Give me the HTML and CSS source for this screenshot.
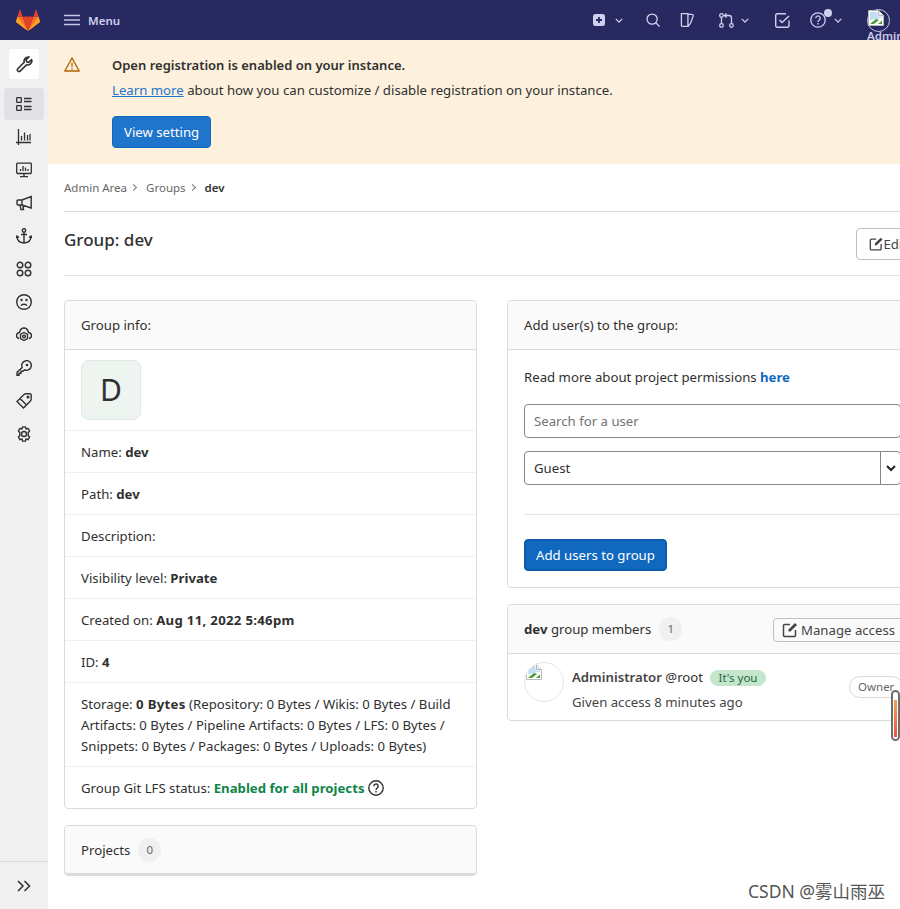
FILE: index.html
```html
<!DOCTYPE html>
<html lang="en">
<head>
    <meta charset="UTF-8">
    <meta name="viewport" content="width=device-width, initial-scale=1.0">
    <title>Group: dev</title>
    <link rel="stylesheet" href="styles.css">
</head>
<body>
    <svg class="sprites" width="0" height="0">
        <symbol id="broken" viewBox="0 0 16 16">
            <path d="M.5.5h10l5 5v10H.5z" fill="#fff" stroke="#b8b8b8"/>
            <path d="M10.5.5v5h5" fill="#eee" stroke="#b8b8b8"/>
            <path d="M2 2h7.500v4.500H14V8L2 10z" fill="#c5dcf5"/>
            <path d="M2 14l6-5 3 1-5 4z" fill="#4f9a35"/>
            <path d="M10 14l4-3.500V14z" fill="#4f9a35"/>
        </symbol>
        <symbol id="edit" viewBox="0 0 16 16">
            <path d="M8 2.500H2.500a1 1 0 0 0-1 1V13.500a1 1 0 0 0 1 1H12.500a1 1 0 0 0 1-1V8" fill="none" stroke="currentColor" stroke-width="1.500"/>
            <path d="M6.500 9.500v-2L13 1l2 2-6.500 6.500z" fill="currentColor"/>
        </symbol>
    </svg>

    <header class="topbar">
        <svg class="logo" width="24" height="22" viewBox="0 0 24 22">
            <path d="M12 22L0 13l1.500-5.500h5z" fill="#fc6d26"/>
            <path d="M12 22l12-9-1.500-5.500h-5z" fill="#fc6d26"/>
            <path d="M12 22L6.500 7.500h11z" fill="#e24329"/>
            <path d="M12 22L1.500 7.500 0 13z" fill="#fca326"/>
            <path d="M12 22L22.500 7.500 24 13z" fill="#fca326"/>
            <path d="M1.500 7.500L4 0l2.500 7.500z" fill="#e24329"/>
            <path d="M22.500 7.500L20 0l-2.500 7.500z" fill="#e24329"/>
        </svg>
        <div class="menu-toggle">
            <svg width="16" height="12" viewBox="0 0 16 12"><path d="M0 1.500h16M0 6h16M0 10.500h16" stroke="#c6c5e8" stroke-width="1.400"/></svg>
            <span class="menu-label">Menu</span>
        </div>
        <div class="topbar-icons">
            <span class="top-item top-new">
                <svg width="12" height="12" viewBox="0 0 12 12"><rect width="12" height="12" rx="2.500" fill="#d1d0ef"/><path d="M6 3v6M3 6h6" stroke="#2b2862" stroke-width="1.800"/></svg>
                <svg class="caret" width="8" height="5" viewBox="0 0 10 6"><path d="M1 1l4 4 4-4" fill="none" stroke="#d1d0ef" stroke-width="1.600"/></svg>
            </span>
            <svg class="top-search" width="14" height="14" viewBox="0 0 16 16"><circle cx="7" cy="7" r="5.800" fill="none" stroke="#d1d0ef" stroke-width="1.500"/><path d="M11 11l4.500 4.500" stroke="#d1d0ef" stroke-width="1.500"/></svg>
            <svg class="top-issue" width="14" height="14" viewBox="0 0 15 15"><path d="M1.500.7h7v13.600h-6a1 1 0 0 1-1-1zM8.500 1.500h4q2 0 1.500 2l-2.500 7L9 14" fill="none" stroke="#d1d0ef" stroke-width="1.400"/></svg>
            <span class="top-item top-mr">
                <svg width="15" height="15" viewBox="0 0 15 15" fill="none" stroke="#d1d0ef" stroke-width="1.300"><circle cx="2.500" cy="2.500" r="1.800"/><circle cx="2.500" cy="12.500" r="1.800"/><circle cx="12.500" cy="12.500" r="1.800"/><path d="M2.500 4.300v6.400M7.500.5L5.500 2.500l2 2M6 2.500h4q2.500 0 2.500 2.500v5.700"/></svg>
                <svg class="caret" width="8" height="5" viewBox="0 0 10 6"><path d="M1 1l4 4 4-4" fill="none" stroke="#d1d0ef" stroke-width="1.600"/></svg>
            </span>
            <svg class="top-todo" width="15" height="15" viewBox="0 0 15 15" fill="none" stroke="#d1d0ef" stroke-width="1.400"><path d="M14 7.500v5.300a1.500 1.500 0 0 1-1.500 1.500H2.200a1.500 1.500 0 0 1-1.500-1.500V2.200A1.500 1.500 0 0 1 2.200.7H11"/><path d="M4.500 7l2.500 2.500L14 3"/></svg>
            <span class="top-item top-help">
                <svg width="16" height="16" viewBox="0 0 16 16" fill="none" stroke="#d1d0ef" stroke-width="1.300"><circle cx="8" cy="8" r="7.200"/><path d="M5.800 6.200a2.200 2.200 0 1 1 3.400 1.800Q8 8.800 8 10M8 11v1.500"/></svg>
                <span class="help-dot"></span>
                <svg class="caret" width="8" height="5" viewBox="0 0 10 6"><path d="M1 1l4 4 4-4" fill="none" stroke="#d1d0ef" stroke-width="1.600"/></svg>
            </span>
            <span class="top-user">
                <span class="top-avatar"><svg width="16" height="16"><use href="#broken"/></svg></span>
                <span class="top-alt">Admin</span>
            </span>
        </div>
    </header>

    <div class="layout">
        <nav class="sidebar">
            <div class="context-tile">
                <svg width="17" height="17" viewBox="0 0 16 16" fill="none" stroke="#303030" stroke-width="1.500"><path d="M15 4.500a4 4 0 0 1-5.200 3.800L3.700 14.400a1.600 1.600 0 0 1-2.200-2.200L7.700 6A4 4 0 0 1 12 1L9.500 3.500l.5 2 2 .5L14.600 3.500q.4.500.4 1z"/></svg>
            </div>
            <a class="side-item active"><svg width="16" height="16" viewBox="0 0 16 16" fill="none" stroke="#303030" stroke-width="1.300"><rect x=".7" y="1.700" width="4.600" height="4.600" rx=".6"/><rect x=".7" y="9.700" width="4.600" height="4.600" rx=".6"/><path d="M8 2.500h7.500M8 5.500h7.500M8 10.500h7.500M8 13.500h7.500"/></svg></a>
            <a class="side-item"><svg width="16" height="16" viewBox="0 0 16 16" fill="none" stroke="#303030" stroke-width="1.300"><path d="M2.500 0v16M0 13.500h15M5.500 7v4.500M8.500 3.500v8M11.500 6v5.500M14 5v6.500"/></svg></a>
            <a class="side-item"><svg width="16" height="16" viewBox="0 0 16 16" fill="none" stroke="#303030" stroke-width="1.300"><rect x=".7" y="1.200" width="14.600" height="10.300" rx=".8"/><path d="M8 11.500v3M4 14.700h8M4.500 9V7M7 9V4M9.500 9V5.500M12 9V7"/></svg></a>
            <a class="side-item"><svg width="16" height="16" viewBox="0 0 16 16" fill="none" stroke="#303030" stroke-width="1.400"><path d="M15.200 1.500v11.500L6 10H2.200A1.200 1.200 0 0 1 1 8.800V6.200A1.200 1.200 0 0 1 2.200 5H6zM6 5v5M4 10l1 4.500h2.500L7 10.500"/></svg></a>
            <a class="side-item"><svg width="16" height="16" viewBox="0 0 16 16" fill="none" stroke="#303030" stroke-width="1.400"><circle cx="8" cy="2.500" r="1.700"/><path d="M8 4.200V15M5 6.500h6M1 8.500q0 6 7 6.500 7-.5 7-6.500M0 10l1-2 2 1.500M16 10l-1-2-2 1.500"/></svg></a>
            <a class="side-item"><svg width="16" height="16" viewBox="0 0 16 16" fill="none" stroke="#303030" stroke-width="1.400"><circle cx="4" cy="4" r="2.800"/><circle cx="12" cy="4" r="2.800"/><circle cx="4" cy="12" r="2.800"/><circle cx="12" cy="12" r="2.800"/></svg></a>
            <a class="side-item"><svg width="16" height="16" viewBox="0 0 16 16" fill="none" stroke="#303030" stroke-width="1.400"><circle cx="8" cy="8" r="7.300"/><path d="M5 11.500q3-2.500 6 0"/><circle cx="5.500" cy="6" r=".5"/><circle cx="10.500" cy="6" r=".5"/></svg></a>
            <a class="side-item"><svg width="16" height="16" viewBox="0 0 16 16" fill="none" stroke="#303030" stroke-width="1.400"><path d="M3 11.500Q.5 11 .5 8.500t3-3Q4.500 1 8 1t4.500 4.500q3 .5 3 3t-2.500 3"/><path d="M8 5.500l3.500 2v4L8 13.500l-3.500-2v-4z"/><circle cx="8" cy="9.500" r="1.300"/></svg></a>
            <a class="side-item"><svg width="16" height="16" viewBox="0 0 16 16" fill="none" stroke="#303030" stroke-width="1.400"><path d="M6.200 7.500a4.800 4.800 0 1 1 2.300 2.300L7 11.300H5v2H3v2H1v-3z"/><circle cx="11" cy="5" r=".6"/></svg></a>
            <a class="side-item"><svg width="16" height="16" viewBox="0 0 16 16" fill="none" stroke="#303030" stroke-width="1.400"><path d="M1 8.500L8 1.500Q9 .8 10 .8h4a1.200 1.200 0 0 1 1.200 1.200v4q0 1-.8 2L7.500 15zM4 5.500l6.500 6.500"/><circle cx="12" cy="4" r=".8"/></svg></a>
            <a class="side-item"><svg width="16" height="16" viewBox="0 0 16 16" fill="none" stroke="#303030" stroke-width="1.400" stroke-linejoin="round"><path d="M6.500.9h3l.5 2.100 2.100-.6 1.500 2.600-1.400 1.500v3l1.400 1.500-1.500 2.600-2.100-.6-.5 2.100h-3l-.5-2.100-2.100.6-1.500-2.600 1.400-1.500v-3L2.400 5l1.500-2.600 2.100.6z"/><circle cx="8" cy="8" r="2.500"/></svg></a>
            <div class="side-collapse">
                <svg width="14" height="12" viewBox="0 0 14 12" fill="none" stroke="#303030" stroke-width="1.500"><path d="M1 1l5 5-5 5M7.500 1l5 5-5 5"/></svg>
            </div>
        </nav>

        <main class="content">
            <section class="banner">
                <svg class="banner-icon" width="16" height="15" viewBox="0 0 16 15" fill="none" stroke="#ab6100" stroke-width="1.300"><path d="M8 1L.8 14h14.400zM8 5.500v4.500M8 11v1.500" stroke-linejoin="round"/></svg>
                <div class="banner-body">
                    <h4 class="banner-title">Open registration is enabled on your instance.</h4>
                    <p class="banner-text"><a class="link-under">Learn more</a> about how you can customize / disable registration on your instance.</p>
                    <a class="btn btn-blue">View setting</a>
                </div>
            </section>

            <div class="container">
                <div class="breadcrumbs">
                    <span>Admin Area</span><i class="crumb-sep"></i><span>Groups</span><i class="crumb-sep"></i><b>dev</b>
                </div>
                <div class="page-head">
                    <h3 class="page-title">Group: dev</h3>
                    <a class="btn btn-edit"><svg width="16" height="16"><use href="#edit"/></svg>Edit</a>
                </div>

                <div class="columns">
                    <div class="col">
                        <div class="card">
                            <div class="card-header">Group info:</div>
                            <div class="card-row avatar-row"><div class="group-avatar">D</div></div>
                            <div class="card-row">Name: <b>dev</b></div>
                            <div class="card-row">Path: <b>dev</b></div>
                            <div class="card-row">Description:</div>
                            <div class="card-row">Visibility level: <b>Private</b></div>
                            <div class="card-row">Created on: <b class="wide">Aug 11, 2022 5:46pm</b></div>
                            <div class="card-row">ID: <b>4</b></div>
                            <div class="card-row storage">Storage: <b class="wide">0 Bytes</b> (Repository: 0 Bytes / Wikis: 0 Bytes / Build Artifacts: 0 Bytes / Pipeline Artifacts: 0 Bytes / LFS: 0 Bytes / Snippets: 0 Bytes / Packages: 0 Bytes / Uploads: 0 Bytes)</div>
                            <div class="card-row">Group Git LFS status: <b class="green">Enabled for all projects</b>
                                <svg class="help-icon" width="16" height="16" viewBox="0 0 16 16" fill="none" stroke="#303030" stroke-width="1.400"><circle cx="8" cy="8" r="7.200"/><path d="M5.800 6.200a2.200 2.200 0 1 1 3.400 1.800Q8 8.800 8 10M8 11v1.500"/></svg>
                            </div>
                        </div>
                        <div class="card card-projects">
                            <div class="card-header">Projects <span class="count">0</span></div>
                        </div>
                    </div>

                    <div class="col">
                        <div class="card">
                            <div class="card-header">Add user(s) to the group:</div>
                            <div class="card-body">
                                <p class="perm-text">Read more about project permissions <a class="link-bold">here</a></p>
                                <div class="input">Search for a user</div>
                                <div class="select"><span>Guest</span><i class="select-arrow"><svg width="10" height="7" viewBox="0 0 10 7"><path d="M1 1l4 4 4-4" fill="none" stroke="#222" stroke-width="2"/></svg></i></div>
                                <div class="form-actions"><a class="btn btn-blue btn-dark">Add users to group</a></div>
                            </div>
                        </div>
                        <div class="card">
                            <div class="card-header members-head">
                                <span class="members-title"><span><b>dev</b> group members</span><span class="count">1</span></span>
                                <a class="btn btn-manage"><svg width="16" height="16"><use href="#edit"/></svg>Manage access</a>
                            </div>
                            <div class="member">
                                <div class="member-avatar"><svg width="16" height="16"><use href="#broken"/></svg></div>
                                <div class="member-info">
                                    <div><b class="semi">Administrator</b> @root <span class="you">It's you</span></div>
                                    <div class="member-sub">Given access 8 minutes ago</div>
                                </div>
                                <span class="role">Owner</span>
                            </div>
                        </div>
                    </div>
                </div>
            </div>
        </main>
    </div>

    <div class="scroll-thumb"><i></i></div>
    <div class="watermark">CSDN @雾山雨巫</div>
</body>
</html>
```
FILE: styles.css
```css
* {
    box-sizing: border-box;
}

html, body {
    height: 909px;
    overflow: hidden;
}

body {
    margin: 0;
    font-family: "Noto Sans", "Open Sans", sans-serif;
    font-size: 13.2px;
    line-height: 20px;
    color: #303030;
    background-color: #fff;
    position: relative;
}

.sprites {
    position: absolute;
}

b {
    font-weight: 700;
}

b.wide {
    letter-spacing: .3px;
}

/* top bar */
.topbar {
    height: 40px;
    width: 900px;
    background-color: #292961;
    display: flex;
    align-items: center;
    padding-left: 16px;
    color: #d1d0ef;
}

.logo {
    flex: none;
}

.menu-toggle {
    display: flex;
    align-items: center;
    gap: 8px;
    margin-left: 24px;
    font-size: 11.5px;
    font-weight: 600;
}

.menu-label {
    margin-top: 1px;
}

.topbar-icons {
    margin-left: auto;
    display: flex;
    align-items: center;
    height: 40px;
    width: 307px;
    flex: none;
}

.top-item {
    display: inline-flex;
    align-items: center;
    gap: 7px;
    position: relative;
}

.top-new {
    gap: 10px;
}

.caret {
    flex: none;
}

.top-search {
    margin-left: 23px;
}

.top-issue {
    margin-left: 20px;
}

.top-mr {
    margin-left: 25px;
}

.top-todo {
    margin-left: 26px;
}

.top-help {
    margin-left: 20px;
    gap: 8px;
}

.help-dot {
    position: absolute;
    left: 14px;
    top: -3px;
    width: 8px;
    height: 8px;
    border-radius: 50%;
    background-color: #d1d0ef;
}

.top-user {
    margin-left: 25px;
    width: 33px;
    height: 40px;
    position: relative;
    overflow: hidden;
    flex: none;
}

.top-avatar {
    position: absolute;
    top: 9px;
    left: 0;
    width: 23px;
    height: 23px;
    border-radius: 50%;
    border: 1px solid #c9c8e4;
}

.top-alt {
    position: absolute;
    left: 0;
    top: 28px;
    font-size: 11.5px;
    line-height: 16px;
    font-weight: 600;
    color: #c9c8e4;
}

/* layout */
.layout {
    display: flex;
    width: 984px;
    height: 869px;
}

.sidebar {
    width: 48px;
    flex: none;
    background-color: #f0f0f0;
    display: flex;
    flex-direction: column;
    align-items: center;
    gap: 1px;
    padding-top: 9px;
}

.context-tile {
    width: 30px;
    height: 30px;
    margin-bottom: 8px;
    background-color: #fff;
    border-radius: 4px;
    display: flex;
    align-items: center;
    justify-content: center;
}

.side-item {
    width: 40px;
    height: 32px;
    border-radius: 4px;
    display: flex;
    align-items: center;
    justify-content: center;
}

.side-item.active {
    background-color: #e1e1e6;
}

.side-collapse {
    margin-top: auto;
    width: 48px;
    height: 48px;
    border-top: 1px solid #dbdbdb;
    display: flex;
    align-items: center;
    justify-content: center;
}

.content {
    flex: 1;
    min-width: 0;
}

/* banner */
.banner {
    height: 124px;
    background-color: #fdf1dd;
    display: flex;
    padding: 16px 16px 0;
}

.banner-icon {
    margin-top: 1px;
    flex: none;
}

.banner-body {
    margin-left: 32px;
}

.banner-title {
    margin: 0 0 6px;
    font-size: 13px;
    font-weight: 600;
    line-height: 18px;
}

.banner-text {
    margin: 0 0 16px;
}

.link-under {
    color: #1f75cb;
    text-decoration: underline;
}

.btn {
    display: inline-flex;
    align-items: center;
    border-radius: 4px;
}

.btn-blue {
    height: 32px;
    padding: 0 11px;
    color: #fff;
    background-color: #1f75cb;
    border: 1px solid #1068bf;
}

.btn-dark {
    background-color: #1068bf;
    border-color: #0b5cad;
    box-shadow: 0 0 0 1px #0b5cad inset;
}

/* page head */
.container {
    padding: 0 64px 0 16px;
}

.breadcrumbs {
    height: 48px;
    padding-top: 1px;
    border-bottom: 1px solid #dbdbdb;
    display: flex;
    align-items: center;
    font-size: 11.5px;
    color: #666;
}

.breadcrumbs b {
    color: #303030;
    font-weight: 600;
}

.crumb-sep {
    width: 5px;
    height: 5px;
    margin: 0 10px 2px 4px;
    border-top: 1px solid #777;
    border-right: 1px solid #777;
    transform: rotate(45deg);
}

.page-head {
    height: 64px;
    border-bottom: 1px solid #e5e5e5;
    display: flex;
    align-items: center;
    justify-content: space-between;
}

.page-title {
    margin: 0 0 7px;
    font-size: 17px;
    font-weight: 500;
}

.btn-edit {
    height: 32px;
    width: 64px;
    padding: 0 12px;
    border: 1px solid #bfbfbf;
    color: #444;
}

.columns {
    display: grid;
    grid-template-columns: 413px 413px;
    column-gap: 30px;
    padding-top: 24px;
}

/* cards */
.card {
    border: 1px solid #dbdbdb;
    border-radius: 4px;
    margin-bottom: 16px;
}

.card-header {
    height: 49px;
    padding: 0 16px;
    display: flex;
    align-items: center;
    background-color: #fafafa;
    border-bottom: 1px solid #dbdbdb;
    border-radius: 4px 4px 0 0;
}

.card-row {
    padding: 11px 16px 10px;
    border-bottom: 1px solid #f0f0f0;
}

.card-row:last-child {
    border-bottom: none;
}

.card-row.storage {
    line-height: 21px;
    padding-bottom: 9px;
}

.avatar-row {
    padding: 10px 16px;
}

.group-avatar {
    width: 60px;
    height: 60px;
    border: 1px solid #e0e8e2;
    border-radius: 8px;
    background-color: #eef4ef;
    display: flex;
    align-items: center;
    justify-content: center;
    font-size: 30px;
}

.green {
    color: #108548;
}

.help-icon {
    vertical-align: -3px;
}

.card-projects .card-header {
    border-bottom-width: 2px;
    border-radius: 4px;
}

.count {
    display: inline-block;
    min-width: 23px;
    height: 24px;
    line-height: 24px;
    margin-left: 8px;
    text-align: center;
    border-radius: 12px;
    background-color: #f0f0f0;
    color: #666;
    font-size: 11.5px;
}

.card-body {
    padding: 17px 16px 16px;
}

.perm-text {
    margin: 0 0 17px;
}

.link-bold {
    color: #1068bf;
    font-weight: 700;
}

.input, .select {
    width: 377px;
    height: 34px;
    border: 1px solid #868686;
    border-radius: 4px;
    display: flex;
    align-items: center;
    padding-left: 9px;
}

.input {
    color: #737373;
    margin-bottom: 13px;
}

.select {
    justify-content: space-between;
    padding-right: 0;
}

.select-arrow {
    width: 20px;
    height: 32px;
    border-left: 1px solid #868686;
    display: flex;
    align-items: center;
    padding-left: 5px;
}

.form-actions {
    margin-top: 29px;
    padding-top: 24px;
    border-top: 1px solid #e5e5e5;
}

.members-head {
    justify-content: space-between;
    padding-right: 0;
}

.members-title {
    display: flex;
    align-items: center;
}

.btn-manage {
    height: 24px;
    width: 146px;
    margin-top: 2px;
    padding: 0 8px;
    gap: 3px;
    border: 1px solid #bfbfbf;
    color: #444;
}

.member {
    display: flex;
    height: 66px;
    padding: 8px 16px 0;
    position: relative;
}

.member-avatar {
    width: 40px;
    height: 40px;
    padding: 1px;
    border: 1px solid #e5e5e5;
    border-radius: 50%;
    flex: none;
    margin-right: 8px;
    overflow: hidden;
}

.member-avatar svg {
    display: block;
}

.member-info {
    margin-top: 5px;
}

.semi {
    color: #444;
    font-weight: 600;
}

.member-sub {
    margin-top: 5px;
    color: #444;
}

.you {
    display: inline-block;
    height: 16px;
    line-height: 16px;
    padding: 0 9px;
    margin-left: 3px;
    background-color: #c3e6cd;
    border-radius: 8px;
    color: #24663b;
    font-size: 11.5px;
}

.role {
    position: absolute;
    left: 341px;
    top: 22px;
    height: 22px;
    padding: 0 8px;
    border: 1px solid #dbdbdb;
    border-radius: 11px;
    font-size: 11.5px;
    color: #666;
    display: flex;
    align-items: center;
}

/* overlays */
.scroll-thumb {
    position: absolute;
    left: 891px;
    top: 690px;
    width: 9px;
    height: 51px;
    border: 2px solid #6e6e6e;
    border-radius: 5px;
    background-color: #fff;
    padding: 8px 1px 0;
}

.scroll-thumb i {
    display: block;
    height: 37px;
    background: linear-gradient(#f5a25a, #f0503c);
}

.watermark {
    position: absolute;
    right: 15px;
    bottom: 8px;
    font-family: "Noto Sans", "Noto Sans CJK SC", sans-serif;
    font-size: 17.5px;
    color: #555;
}
```
